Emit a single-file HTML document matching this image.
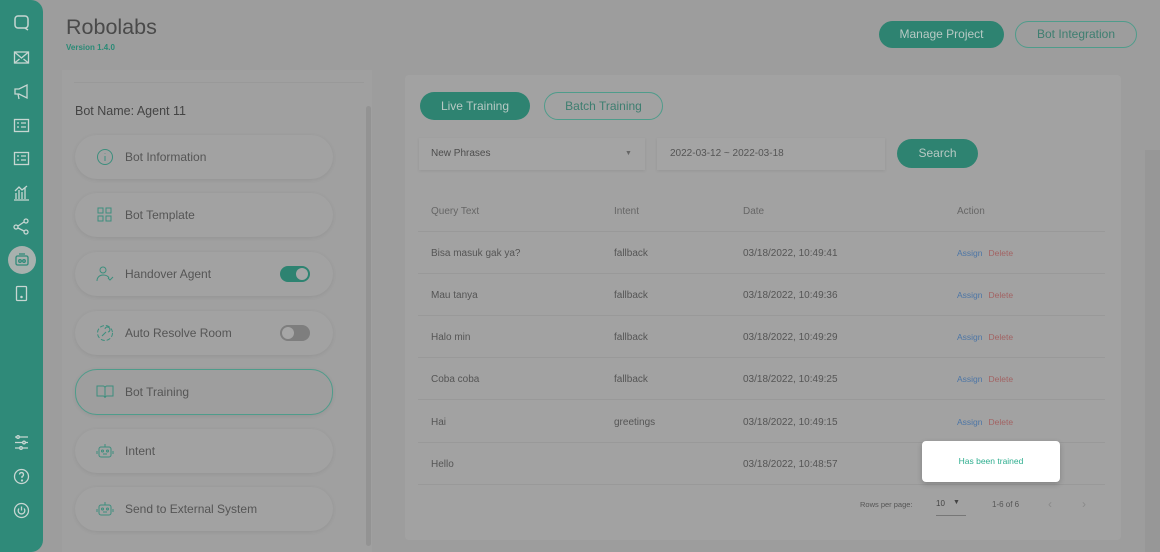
<!DOCTYPE html>
<html><head><meta charset="utf-8"><style>
*{box-sizing:border-box;margin:0;padding:0}
body{width:1160px;height:552px;overflow:hidden;background:#9d9d9d;font-family:"Liberation Sans",sans-serif;position:relative;color:#4d4d4d}
.abs{position:absolute}
.side{left:0;top:0;width:43px;height:552px;background:#2f8a79;border-radius:0 12px 12px 0}
.side svg{position:absolute;left:13px}
.title{left:66px;top:15px;font-size:21.5px;color:#4a4a4a}
.ver{left:66px;top:43px;font-size:8px;color:#2a8a76;font-weight:bold}
.btn{border-radius:16px;font-size:12px;text-align:center;line-height:26px}
.fill{background:#2e8371;color:#b7c9c4}
.out{border:1px solid #4f9c8b;color:#3e7e70}
.lp{left:62px;top:70px;width:310px;height:482px;background:#a0a0a0}
.item{position:absolute;left:75px;width:258px;height:44px;border-radius:22px;background:#a2a2a2;box-shadow:0 1px 4px rgba(0,0,0,.08);font-size:12px;color:#555;line-height:44px;padding-left:50px}
.item svg{position:absolute;left:21px;top:13px}
.tog{position:absolute;left:205px;top:14px;width:30px;height:16px;border-radius:8px}
.tog i{position:absolute;top:2px;width:12px;height:12px;border-radius:50%;background:#a6a6a6}
.card{left:405px;top:75px;width:716px;height:465px;background:#a2a2a2;border-radius:4px}
.row{position:absolute;left:418px;width:687px;height:42px;border-bottom:1px solid #999;font-size:10px;color:#555}
.row span{position:absolute;top:16px}
.c1{left:13px}.c2{left:196px}.c3{left:325px}.c4{left:539px}
.as{color:#4d76a6;font-size:8.5px}.de{color:#a36363;font-size:8.5px;margin-left:6px}
</style></head><body>
<div class="abs side">
<svg style="top:14px" width="17" height="17" viewBox="0 0 17 17" fill="none" stroke="#c7d6d2" stroke-width="1.5"><rect x="2" y="2" width="13" height="12" rx="3"/><path d="M12 14l3 2"/></svg>
<svg style="top:49px" width="17" height="17" viewBox="0 0 17 17" fill="none" stroke="#c7d6d2" stroke-width="1.3"><rect x="1.5" y="3" width="14" height="11"/><path d="M1.5 3l7 6 7-6M1.5 14l5-4M15.5 14l-5-4"/></svg>
<svg style="top:83px" width="17" height="17" viewBox="0 0 17 17" fill="none" stroke="#c7d6d2" stroke-width="1.3"><path d="M2 6h4l8-4v13l-8-4H2zM5 11l1 5"/></svg>
<svg style="top:117px" width="17" height="17" viewBox="0 0 17 17" fill="none" stroke="#c7d6d2" stroke-width="1.3"><rect x="1.5" y="2.5" width="14" height="12"/><path d="M4 6h2M8 6h5M4 10h2M8 10h5"/></svg>
<svg style="top:150px" width="17" height="17" viewBox="0 0 17 17" fill="none" stroke="#c7d6d2" stroke-width="1.3"><rect x="1.5" y="2.5" width="14" height="12"/><path d="M4 6h2M8 6h5M4 10h2M8 10h5"/></svg>
<svg style="top:184px" width="17" height="17" viewBox="0 0 17 17" fill="none" stroke="#c7d6d2" stroke-width="1.3"><path d="M1 16h15M3 15V9M6 15V6M9 15V8M12 15V4M2 7l4-4 3 3 5-4"/></svg>
<svg style="top:218px" width="17" height="17" viewBox="0 0 17 17" fill="none" stroke="#c7d6d2" stroke-width="1.3"><circle cx="3" cy="9" r="2"/><circle cx="13" cy="3" r="2"/><circle cx="13" cy="14" r="2"/><path d="M5 8l6-4M5 10l6 3"/></svg>
<div class="abs" style="left:8px;top:246px;width:28px;height:28px;border-radius:50%;background:#a8b1ae"></div>
<svg style="top:252px;left:14px" width="16" height="16" viewBox="0 0 16 16" fill="none" stroke="#2f8a79" stroke-width="1.3"><rect x="2" y="4" width="12" height="9" rx="1.5"/><path d="M5 2h6"/><circle cx="6" cy="9" r="1.3"/><circle cx="10" cy="9" r="1.3"/></svg>
<svg style="top:285px" width="17" height="17" viewBox="0 0 17 17" fill="none" stroke="#c7d6d2" stroke-width="1.3"><rect x="3.5" y="1.5" width="10" height="14" rx="1"/><circle cx="8.5" cy="12" r=".6"/></svg>
<svg style="top:434px" width="17" height="17" viewBox="0 0 17 17" fill="none" stroke="#c7d6d2" stroke-width="1.3"><path d="M2 3h13M2 8.5h13M2 14h13"/><circle cx="5" cy="3" r="1.3" fill="#2f8a79"/><circle cx="11" cy="8.5" r="1.3" fill="#2f8a79"/><circle cx="8" cy="14" r="1.3" fill="#2f8a79"/></svg>
<svg style="top:468px" width="17" height="17" viewBox="0 0 17 17" fill="none" stroke="#c7d6d2" stroke-width="1.3"><circle cx="8.5" cy="8.5" r="7"/><path d="M6.5 6.5a2 2 0 1 1 2.5 2v1.5"/><circle cx="9" cy="12.5" r=".5"/></svg>
<svg style="top:502px" width="17" height="17" viewBox="0 0 17 17" fill="none" stroke="#c7d6d2" stroke-width="1.3"><circle cx="8.5" cy="8.5" r="7"/><path d="M6 6.5a3.3 3.3 0 1 0 5 0M8.5 4.5v4"/></svg>
</div>
<div class="abs title">Robolabs</div>
<div class="abs ver">Version 1.4.0</div>
<div class="abs btn fill" style="left:879px;top:21px;width:125px;height:27px">Manage Project</div>
<div class="abs btn out" style="left:1015px;top:21px;width:122px;height:27px;line-height:25px">Bot Integration</div>
<div class="abs" style="left:1145px;top:150px;width:15px;height:402px;background:#979797"></div>
<div class="abs lp"></div>
<div class="abs" style="left:74px;top:82px;width:290px;height:1px;background:#999"></div>
<div class="abs" style="left:366px;top:106px;width:5px;height:440px;border-radius:3px;background:#939393"></div>
<div class="abs" style="left:75px;top:104px;font-size:12.5px;color:#444">Bot Name: Agent 11</div>
<div class="item" style="top:135px"><svg width="18" height="18" viewBox="0 0 18 18" fill="none" stroke="#3c8e7d" stroke-width="1"><circle cx="9" cy="9" r="7.5"/><path d="M9 8v5M9 5.5v.5"/></svg>Bot Information</div>
<div class="item" style="top:193px"><svg width="18" height="18" viewBox="0 0 18 18" fill="none" stroke="#3c8e7d" stroke-width="1"><rect x="2" y="2" width="5" height="5"/><rect x="10" y="2" width="5" height="5"/><rect x="2" y="10" width="5" height="5"/><rect x="10" y="10" width="5" height="5"/></svg>Bot Template</div>
<div class="item" style="top:252px"><svg width="18" height="18" viewBox="0 0 18 18" fill="none" stroke="#3c8e7d" stroke-width="1"><circle cx="7" cy="5" r="3"/><path d="M1 16c0-4 3-6 6-6s5 1 6 3M12 13l2 2 3-3"/></svg>Handover Agent<div class="tog" style="background:#2e8371"><i style="left:16px"></i></div></div>
<div class="item" style="top:311px"><svg width="18" height="18" viewBox="0 0 18 18" fill="none" stroke="#3c8e7d" stroke-width="1"><circle cx="9" cy="9" r="7.5" stroke-dasharray="4 2"/><path d="M6 12l4-4M9 5a2.5 2.5 0 1 1 3 3"/></svg>Auto Resolve Room<div class="tog" style="background:#7e7e7e"><i style="left:2px"></i></div></div>
<div class="item" style="top:369px;height:46px;border:1px solid #4f9c8b;background:#9e9e9e;line-height:44px;padding-left:49px"><svg width="18" height="18" viewBox="0 0 18 18" fill="none" stroke="#3c8e7d" stroke-width="1" style="left:20px"><path d="M1 3h6a2 2 0 0 1 2 2v10a2 2 0 0 0-2-2H1zM17 3h-6a2 2 0 0 0-2 2v10a2 2 0 0 1 2-2h6z"/></svg>Bot Training</div>
<div class="item" style="top:429px"><svg width="18" height="18" viewBox="0 0 18 18" fill="none" stroke="#3c8e7d" stroke-width="1"><rect x="3" y="5" width="12" height="10" rx="2"/><path d="M9 5V2M1 9v3M17 9v3M7 12h4"/><circle cx="6.5" cy="9" r="1"/><circle cx="11.5" cy="9" r="1"/></svg>Intent</div>
<div class="item" style="top:487px"><svg width="18" height="18" viewBox="0 0 18 18" fill="none" stroke="#3c8e7d" stroke-width="1"><rect x="3" y="5" width="12" height="10" rx="2"/><path d="M9 5V2M1 9v3M17 9v3M7 12h4"/><circle cx="6.5" cy="9" r="1"/><circle cx="11.5" cy="9" r="1"/></svg>Send to External System</div>
<div class="abs card"></div>
<div class="abs btn fill" style="left:420px;top:92px;width:110px;height:28px;line-height:28px">Live Training</div>
<div class="abs btn out" style="left:544px;top:92px;width:119px;height:28px">Batch Training</div>
<div class="abs" style="left:419px;top:138px;width:226px;height:32px;background:#a4a4a4;box-shadow:0 1px 3px rgba(0,0,0,.08);font-size:10px;line-height:32px;padding-left:12px;color:#4d4d4d">New Phrases<span style="position:absolute;left:206px;font-size:7px;color:#666">▼</span></div>
<div class="abs" style="left:657px;top:138px;width:228px;height:32px;background:#a4a4a4;box-shadow:0 1px 3px rgba(0,0,0,.08);font-size:10px;line-height:32px;padding-left:13px;color:#555">2022-03-12 ~ 2022-03-18</div>
<div class="abs btn fill" style="left:897px;top:139px;width:81px;height:29px;line-height:29px">Search</div>
<div class="row" style="top:190px;height:42px;color:#666"><span class="c1" style="top:16px">Query Text</span><span class="c2">Intent</span><span class="c3">Date</span><span class="c4">Action</span></div>
<div class="row" style="top:232px"><span class="c1">Bisa masuk gak ya?</span><span class="c2">fallback</span><span class="c3">03/18/2022, 10:49:41</span><span class="c4"><b class="as" style="font-weight:normal">Assign</b><b class="de" style="font-weight:normal">Delete</b></span></div>
<div class="row" style="top:274px"><span class="c1">Mau tanya</span><span class="c2">fallback</span><span class="c3">03/18/2022, 10:49:36</span><span class="c4"><b class="as" style="font-weight:normal">Assign</b><b class="de" style="font-weight:normal">Delete</b></span></div>
<div class="row" style="top:316px"><span class="c1">Halo min</span><span class="c2">fallback</span><span class="c3">03/18/2022, 10:49:29</span><span class="c4"><b class="as" style="font-weight:normal">Assign</b><b class="de" style="font-weight:normal">Delete</b></span></div>
<div class="row" style="top:358px"><span class="c1">Coba coba</span><span class="c2">fallback</span><span class="c3">03/18/2022, 10:49:25</span><span class="c4"><b class="as" style="font-weight:normal">Assign</b><b class="de" style="font-weight:normal">Delete</b></span></div>
<div class="row" style="top:401px"><span class="c1">Hai</span><span class="c2">greetings</span><span class="c3">03/18/2022, 10:49:15</span><span class="c4"><b class="as" style="font-weight:normal">Assign</b><b class="de" style="font-weight:normal">Delete</b></span></div>
<div class="row" style="top:443px"><span class="c1">Hello</span><span class="c3">03/18/2022, 10:48:57</span></div>
<div class="abs" style="left:860px;top:500px;font-size:7.5px;color:#555">Rows per page:</div>
<div class="abs" style="left:936px;top:499px;font-size:8px;color:#444">10</div>
<div class="abs" style="left:953px;top:499px;font-size:7px;color:#444">▼</div>
<div class="abs" style="left:936px;top:515px;width:30px;height:1px;background:#777"></div>
<div class="abs" style="left:992px;top:500px;font-size:8px;color:#555">1-6 of 6</div>
<div class="abs" style="left:1048px;top:497px;font-size:12px;color:#8a8a8a">‹</div>
<div class="abs" style="left:1082px;top:497px;font-size:12px;color:#8a8a8a">›</div>
<div class="abs" style="left:922px;top:441px;width:138px;height:41px;background:#fff;border-radius:4px;box-shadow:0 2px 6px rgba(0,0,0,.2);text-align:center;line-height:41px;font-size:8.5px;color:#2fae8f">Has been trained</div>
</body></html>
